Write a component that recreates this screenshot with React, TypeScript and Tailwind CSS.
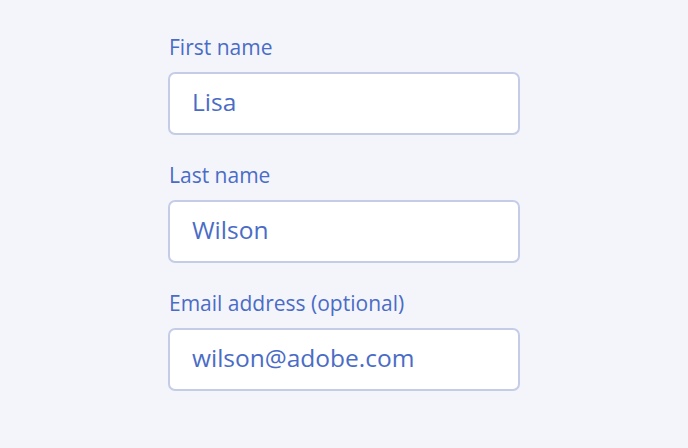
import React from "react";

const fields = [
  { label: "First name", value: "Lisa" },
  { label: "Last name", value: "Wilson" },
  { label: "Email address (optional)", value: "wilson@adobe.com" },
];

export default function App() {
  return (
    <div
      className="w-[688px] h-[448px] bg-[#f4f5fb] flex flex-col items-center pt-[35px] gap-[28px]"
      style={{ fontFamily: '"Open Sans", "Noto Sans", sans-serif' }}
    >
      {fields.map((f) => (
        <label key={f.label} className="flex flex-col w-[352px]">
          <span className="text-[21px] leading-[24px] text-[#4a6cc6] mb-[13px] pl-[1px]">{f.label}</span>
          <input
            defaultValue={f.value}
            className="h-[63px] w-full rounded-[7px] border-2 border-[#c5cce8] bg-white pl-[22px] pr-[22px] pb-[5px] text-[24.5px] text-[#4a6cc6] outline-none"
          />
        </label>
      ))}
    </div>
  );
}
